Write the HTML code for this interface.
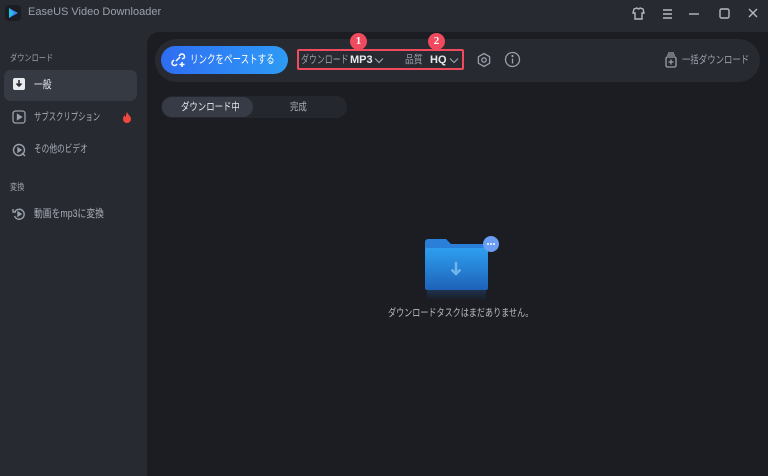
<!DOCTYPE html><html><head><meta charset="utf-8"><style>
*{margin:0;padding:0;box-sizing:border-box}
body{width:768px;height:476px;background:#272a31;font-family:"Liberation Sans","Noto Sans CJK JP",sans-serif;position:relative;overflow:hidden;color:#c9ccd3}
.a{position:absolute;white-space:nowrap;line-height:14px}
.c{transform:scaleX(.8);transform-origin:left center}
</style></head><body>
<div class="a" style="left:5px;top:5px;width:16px;height:16px;background:#1b1d22;border-radius:4px"></div>
<svg class="a" style="left:8px;top:7px" width="11" height="12"><path d="M1 1 L10 6 L1 11Z" fill="#3b82f6"/><path d="M1 1 L6 6 L1 11Z" fill="#22c1e8"/></svg>
<div class="a" style="left:28px;top:5px;font-size:11px;color:#9aa0aa">EaseUS Video Downloader</div>
<svg class="a" style="left:630px;top:6px" width="130" height="16" fill="none" stroke="#b5b9c2" stroke-width="1.4">
<path d="M4 3 L7 2 Q8.5 4 10 2 L13 3 L14 7 L12 7 L12 13 L5 13 L5 7 L3 7Z"/>
<path d="M33 4h9M33 8h9M33 12h9"/>
<path d="M59 8h10"/>
<rect x="90" y="3" width="9" height="9" rx="1.5"/>
<path d="M119 3l8 8M127 3l-8 8"/></svg>
<div class="a c" style="left:10px;top:51px;font-size:9px;color:#9aa0aa">ダウンロード</div>
<div class="a" style="left:4px;top:70px;width:133px;height:31px;background:#363a43;border-radius:7px"></div>
<svg class="a" style="left:12px;top:77px" width="14" height="14"><rect x="1" y="1" width="12" height="12" rx="2" fill="#e8eaee"/><path d="M7 3v6M4.5 6.5L7 9l2.5-2.5" stroke="#272a31" stroke-width="1.6" fill="none"/></svg>
<div class="a c" style="left:34px;top:78px;font-size:11px;color:#e6e8ec">一般</div>
<svg class="a" style="left:12px;top:110px" width="14" height="14" fill="none" stroke="#9aa0aa" stroke-width="1.3"><rect x="1" y="1" width="12" height="12" rx="2.5"/><path d="M5.5 4.5v5l4-2.5z" fill="#9aa0aa"/></svg>
<div class="a c" style="left:34px;top:110px;font-size:10.5px;color:#a9aeb7;transform:scaleX(.7)">サブスクリプション</div>
<svg class="a" style="left:122px;top:111px" width="10" height="12"><path d="M5 1C6 4 9 5 9 8a4 4 0 0 1-8 0c0-2 1-3 2-4 0 2 1 2 1 2 0-2 0-3 1-5z" fill="#f0483e"/></svg>
<svg class="a" style="left:12px;top:143px" width="14" height="14" fill="none" stroke="#9aa0aa" stroke-width="1.4"><circle cx="7" cy="7" r="5.5"/><path d="M6 5v4l3-2z" fill="#9aa0aa"/><path d="M10 10l3 3"/></svg>
<div class="a c" style="left:34px;top:142px;font-size:10.5px;color:#a9aeb7;transform:scaleX(.73)">その他のビデオ</div>
<div class="a c" style="left:10px;top:180px;font-size:9px;color:#9aa0aa">変換</div>
<svg class="a" style="left:12px;top:207px" width="14" height="14" fill="none" stroke="#9aa0aa" stroke-width="1.4"><path d="M2.5 9A5 5 0 1 0 3 4.5"/><path d="M1 2v3h3"/><path d="M6 5v4l3-2z" fill="#9aa0aa"/></svg>
<div class="a c" style="left:34px;top:207px;font-size:11px;color:#a9aeb7">動画をmp3に変換</div>
<div class="a" style="left:147px;top:32px;width:621px;height:444px;background:#1b1d22;border-top-left-radius:12px"></div>
<div class="a" style="left:155px;top:39px;width:605px;height:43px;background:#272a31;border-radius:22px"></div>
<div class="a" style="left:161px;top:46px;width:127px;height:28px;border-radius:14px;background:linear-gradient(90deg,#2f6df2,#2e9bf5)"></div>
<svg class="a" style="left:170px;top:52px" width="16" height="16" fill="none" stroke="#fff" stroke-width="1.5"><path d="M6 9l4-4M4 8l-1.5 1.5a2.5 2.5 0 0 0 3.5 3.5L7 12M9 4l1.5-1.5a2.5 2.5 0 0 1 3.5 3.5L12 7"/><path d="M12 10v5M9.5 12.5h5"/></svg>
<div class="a c" style="left:190px;top:53px;font-size:11.5px;color:#fff;transform:scaleX(.74)">リンクをペーストする</div>
<div class="a" style="left:297px;top:49px;width:167px;height:21px;border:2px solid #ef4a5e;border-radius:2px"></div>
<div class="a c" style="left:301px;top:53px;font-size:11px;color:#9aa0aa;transform:scaleX(.72)">ダウンロード</div>
<div class="a" style="left:350px;top:53px;font-size:11px;font-weight:bold;color:#e6e8ec">MP3</div>
<svg class="a" style="left:374px;top:57px" width="10" height="7" fill="none" stroke="#9aa0aa" stroke-width="1.2"><path d="M1 1.5l4 4 4-4"/></svg>
<div class="a c" style="left:405px;top:53px;font-size:11px;color:#9aa0aa">品質</div>
<div class="a" style="left:430px;top:53px;font-size:11px;font-weight:bold;color:#e6e8ec">HQ</div>
<svg class="a" style="left:449px;top:57px" width="10" height="7" fill="none" stroke="#9aa0aa" stroke-width="1.2"><path d="M1 1.5l4 4 4-4"/></svg>
<div class="a" style="left:350px;top:33px;width:17px;height:17px;border-radius:50%;background:#ef4a5e;color:#fff;font:bold 11px 'Liberation Serif',serif;text-align:center;line-height:17px">1</div>
<div class="a" style="left:428px;top:33px;width:17px;height:17px;border-radius:50%;background:#ef4a5e;color:#fff;font:bold 11px 'Liberation Serif',serif;text-align:center;line-height:17px">2</div>
<svg class="a" style="left:476px;top:52px" width="16" height="16" fill="none" stroke="#9aa0aa" stroke-width="1.3"><path d="M8 1.5l5.6 3.2v6.6L8 14.5 2.4 11.3V4.7z"/><circle cx="8" cy="8" r="2.2"/></svg>
<svg class="a" style="left:504px;top:51px" width="17" height="17" fill="none" stroke="#9aa0aa" stroke-width="1.3"><circle cx="8.5" cy="8.5" r="7"/><path d="M8.5 7.5v5"/><circle cx="8.5" cy="5" r=".5" fill="#9aa0aa"/></svg>
<svg class="a" style="left:664px;top:52px" width="14" height="16" fill="none" stroke="#9aa0aa" stroke-width="1.3"><rect x="2" y="5" width="10" height="10" rx="1.5"/><path d="M3 3h8M4 1h6M7 7.5v5M4.5 10h5"/></svg>
<div class="a c" style="left:682px;top:53px;font-size:10.5px;color:#9aa0aa">一括ダウンロード</div>
<div class="a" style="left:161px;top:96px;width:186px;height:22px;border-radius:11px;background:#24272d"></div>
<div class="a" style="left:162px;top:97px;width:91px;height:20px;border-radius:10px;background:#363b45"></div>
<div class="a c" style="left:181px;top:100px;font-size:10.5px;color:#e6e8ec">ダウンロード中</div>
<div class="a c" style="left:290px;top:100px;font-size:10.5px;color:#a9aeb7">完成</div>
<svg class="a" style="left:422px;top:234px" width="82" height="70"><defs><linearGradient id="g" x1="0" y1="0" x2="0" y2="1"><stop offset="0" stop-color="#2e9ff0"/><stop offset="1" stop-color="#1e62b8"/></linearGradient><linearGradient id="r" x1="0" y1="0" x2="0" y2="1"><stop offset="0" stop-color="#1e3350"/><stop offset="1" stop-color="#1b1d22"/></linearGradient></defs>
<path d="M3 8a3 3 0 0 1 3-3h18l5 5h34a2 2 0 0 1 2 2v8H3z" fill="#2a7fd8"/>
<rect x="3" y="14" width="63" height="42" rx="2" fill="url(#g)"/>
<rect x="5" y="56" width="59" height="10" fill="url(#r)"/>
<path d="M34 28v12M29.5 35.5L34 40l4.5-4.5" stroke="#6fb5ec" stroke-width="2.5" fill="none"/>
<circle cx="69" cy="10" r="8" fill="#6a9ef5"/><circle cx="66" cy="10" r="1" fill="#fff"/><circle cx="69" cy="10" r="1" fill="#fff"/><circle cx="72" cy="10" r="1" fill="#fff"/></svg>
<div class="a c" style="left:388px;top:306px;font-size:10.5px;color:#b5b9c2;transform:scaleX(.77)">ダウンロードタスクはまだありません。</div>
</body></html>
